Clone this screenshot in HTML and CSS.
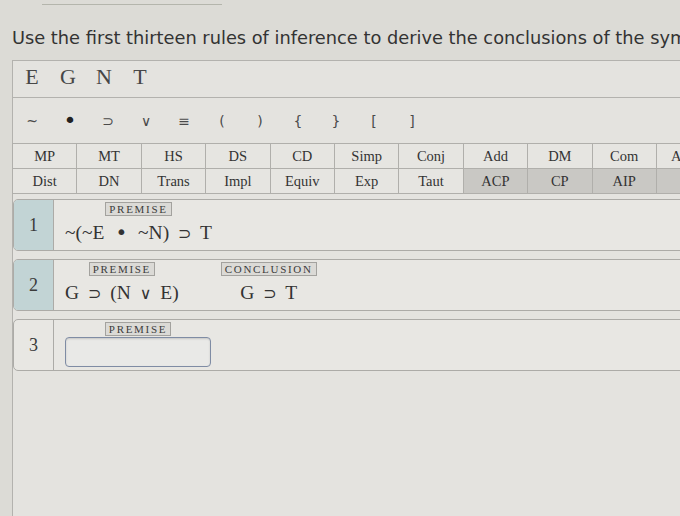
FILE: index.html
```html
<!DOCTYPE html>
<html lang="en">
<head>
    <meta charset="UTF-8">
    <meta name="viewport" content="width=device-width, initial-scale=1.0">
    <title>Proof - Rules of Inference</title>
    <link rel="stylesheet" href="styles.css">
</head>
<body>
    <div class="top-rule"></div>

    <p class="prompt">Use the first thirteen rules of inference to derive the conclusions of the symbolized arguments.</p>

    <div class="panel">
        <div class="letters">
            <span>E</span><span>G</span><span>N</span><span>T</span>
        </div>

        <div class="symbols">
            <button>~</button>
            <button class="dot">&bull;</button>
            <button>&sup;</button>
            <button>&or;</button>
            <button>&equiv;</button>
            <button>(</button>
            <button>)</button>
            <button>{</button>
            <button>}</button>
            <button>[</button>
            <button>]</button>
        </div>

        <div class="rules">
            <div class="rule">MP</div>
            <div class="rule">MT</div>
            <div class="rule">HS</div>
            <div class="rule">DS</div>
            <div class="rule">CD</div>
            <div class="rule">Simp</div>
            <div class="rule">Conj</div>
            <div class="rule">Add</div>
            <div class="rule">DM</div>
            <div class="rule">Com</div>
            <div class="rule">Assoc</div>
            <div class="rule">Dist</div>
            <div class="rule">DN</div>
            <div class="rule">Trans</div>
            <div class="rule">Impl</div>
            <div class="rule">Equiv</div>
            <div class="rule">Exp</div>
            <div class="rule">Taut</div>
            <div class="rule dim">ACP</div>
            <div class="rule dim">CP</div>
            <div class="rule dim">AIP</div>
            <div class="rule dim">IP</div>
        </div>

        <div class="proof">
            <div class="line given">
                <div class="num">1</div>
                <div class="body">
                    <div class="item">
                        <span class="tag">PREMISE</span>
                        <div class="wff">~(~E <span class="op dot">&bull;</span> ~N) <span class="op">&sup;</span> T</div>
                    </div>
                </div>
            </div>

            <div class="line given">
                <div class="num">2</div>
                <div class="body">
                    <div class="item">
                        <span class="tag">PREMISE</span>
                        <div class="wff">G <span class="op">&sup;</span> (N <span class="op">&or;</span> E)</div>
                    </div>
                    <div class="item goal">
                        <span class="tag">CONCLUSION</span>
                        <div class="wff">G <span class="op">&sup;</span> T</div>
                    </div>
                </div>
            </div>

            <div class="line">
                <div class="num">3</div>
                <div class="body">
                    <div class="item">
                        <span class="tag">PREMISE</span>
                        <input class="entry" type="text">
                    </div>
                </div>
            </div>
        </div>
    </div>
</body>
</html>
```
FILE: styles.css
```css
* {
    margin: 0;
    padding: 0;
    box-sizing: border-box;
}
body {
    width: 680px;
    height: 516px;
    overflow: hidden;
    background-color: #dcdbd6;
    color: #2e2e2e;
    font-family: "DejaVu Sans", Verdana, sans-serif;
}
.top-rule {
    width: 180px;
    height: 5px;
    margin-left: 42px;
    border-bottom: 1px solid #b4b5ac;
}
.prompt {
    margin: 23px 0 12px 12px;
    width: 700px;
    font-size: 17.8px;
    line-height: 20px;
    white-space: nowrap;
    overflow: hidden;
    color: #333;
}
.panel {
    width: 760px;
    margin-left: 12px;
    background-color: #e4e3df;
    border-top: 1px solid #b3b2ae;
    border-left: 1px solid #b3b2ae;
    padding-bottom: 146px;
}
.letters {
    height: 37px;
    display: flex;
    align-items: center;
    padding: 0 0 4px 1px;
    border-bottom: 1px solid #b3b2ae;
    font-family: "Liberation Serif", "Times New Roman", serif;
    font-size: 22px;
    color: #474747;
}
.letters span {
    width: 36px;
    text-align: center;
}
.symbols {
    height: 45px;
    display: flex;
    align-items: center;
}
.symbols button {
    width: 38px;
    height: 30px;
    border: none;
    background: none;
    font-family: "DejaVu Sans", sans-serif;
    font-size: 14px;
    color: #4a4a4a;
}
.symbols .dot {
    font-size: 22px;
    color: #222;
}
.rules {
    display: grid;
    grid-template-columns: repeat(11, 64.4px);
    border-top: 1px solid #b0afab;
    border-left: 1px solid #b0afab;
    margin-left: -1px;
    font-family: "Liberation Serif", "Times New Roman", serif;
    font-size: 14.5px;
    color: #333;
}
.rule {
    height: 25px;
    display: flex;
    align-items: center;
    justify-content: center;
    border-right: 1px solid #b0afab;
    border-bottom: 1px solid #b0afab;
    background-color: #e6e5e1;
}
.rule.dim {
    background-color: #c9c8c4;
}
.proof {
    display: flex;
    flex-direction: column;
    gap: 8px;
    margin-top: 5px;
}
.line {
    display: flex;
    height: 52px;
    border: 1px solid #acaba7;
    border-radius: 5px;
    background-color: #e8e7e3;
    overflow: hidden;
}
.num {
    width: 40px;
    display: flex;
    align-items: center;
    justify-content: center;
    border-right: 1px solid #acaba7;
    font-family: "Liberation Serif", "Times New Roman", serif;
    font-size: 18px;
    color: #3a3a3a;
}
.given .num {
    background-color: #c2d4d5;
}
.body {
    display: flex;
    gap: 42px;
    padding: 2px 0 0 11px;
}
.item {
    display: flex;
    flex-direction: column;
    align-items: center;
}
.tag {
    padding: 0 3px;
    height: 14px;
    line-height: 13px;
    border: 1px solid #a3a29e;
    background-color: #dbdad6;
    font-family: "Liberation Serif", "Times New Roman", serif;
    font-size: 11px;
    letter-spacing: 1.7px;
    color: #3c3c3c;
}
.wff {
    margin-top: 6px;
    font-family: "Liberation Serif", "Times New Roman", serif;
    font-size: 19.5px;
    line-height: 22px;
    color: #333;
}
.wff .op {
    display: inline-block;
    margin: 0 4px;
    font-family: "DejaVu Sans", sans-serif;
    font-size: 16px;
}
.wff .dot {
    margin: 0 6px;
    font-size: 20px;
    line-height: 18px;
}
.entry {
    width: 146px;
    height: 30px;
    margin-top: 1px;
    border: 1px solid #7f8ca4;
    border-radius: 4px;
    background-color: #e9e9e7;
    box-shadow: inset 0 1px 2px rgba(0, 0, 0, 0.15);
}
```
